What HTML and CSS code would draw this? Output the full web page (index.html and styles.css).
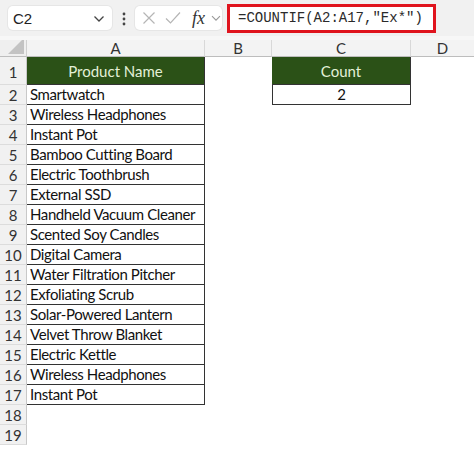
FILE: index.html
```html
<!DOCTYPE html>
<html>
<head>
    <meta charset='utf-8'>
    <title>Book1</title>
    <link rel="stylesheet" href="styles.css">
</head>
<body>
<div class="app">
    <div class="toolbar">
        <div class="nameBox">
            <span>C2</span>
            <svg class="chev" width="12" height="8" viewBox="0 0 12 8"><path d="M1.5 1.5 L6 6 L10.5 1.5" fill="none" stroke="#444" stroke-width="1.3"/></svg>
        </div>
        <div class="dots">
            <svg width="4" height="14" viewBox="0 0 4 14"><circle cx="2" cy="2" r="1.4" fill="#444"/><circle cx="2" cy="7" r="1.4" fill="#444"/><circle cx="2" cy="12" r="1.4" fill="#444"/></svg>
        </div>
        <div class="fxBox">
            <svg width="14" height="14" viewBox="0 0 14 14"><path d="M1.5 1.5 L12.5 12.5 M12.5 1.5 L1.5 12.5" stroke="#b5b5b5" stroke-width="1.2"/></svg>
            <svg width="16" height="14" viewBox="0 0 16 14"><path d="M1 7.5 L5.5 12 L15 1.5" fill="none" stroke="#b5b5b5" stroke-width="1.2"/></svg>
            <span class="fx">fx</span>
            <svg width="10" height="7" viewBox="0 0 10 7"><path d="M1 1.2 L5 5.2 L9 1.2" fill="none" stroke="#999" stroke-width="1.1"/></svg>
        </div>
        <div class="formula">=COUNTIF(A2:A17,"Ex*")</div>
    </div>

    <div class="sheet" id="sheet">
        <div class="corner">
            <svg width="18" height="18" viewBox="0 0 18 18"><path d="M17 1 L17 17 L1 17 Z" fill="#c3c3c3"/></svg>
        </div>
        <div class="colHead">A</div>
        <div class="colHead">B</div>
        <div class="colHead">C</div>
        <div class="colHead last">D</div>
    </div>
</div>

<script>
    // fill the sheet rows
    var products = [
        "Smartwatch", "Wireless Headphones", "Instant Pot", "Bamboo Cutting Board",
        "Electric Toothbrush", "External SSD", "Handheld Vacuum Cleaner", "Scented Soy Candles",
        "Digital Camera", "Water Filtration Pitcher", "Exfoliating Scrub", "Solar-Powered Lantern",
        "Velvet Throw Blanket", "Electric Kettle", "Wireless Headphones", "Instant Pot"
    ];
    var sheet = document.getElementById("sheet");

    function cell(cls, text) {
        var d = document.createElement("div");
        d.className = cls;
        if (text) d.textContent = text;
        sheet.appendChild(d);
    }

    for (var r = 1; r <= 19; r++) {
        cell(r == 1 ? "rowHead first" : "rowHead", String(r));
        if (r == 1) {
            cell("cell head", "Product Name");
            cell("cell");
            cell("cell head", "Count");
            cell("cell");
        } else if (r <= 17) {
            cell("cell item", products[r - 2]);
            cell("cell");
            if (r == 2) cell("cell num", "2");
            else cell("cell");
            cell("cell");
        } else {
            cell("cell"); cell("cell"); cell("cell"); cell("cell");
        }
    }
</script>
</body>
</html>
```

FILE: styles.css
```css
html, body {
    margin: 0;
    padding: 0;
    background: #ffffff;
}

.app {
    width: 474px;
    height: 449px;
    overflow: hidden;
    font-family: "Lato", "Liberation Sans", sans-serif;
}

.toolbar {
    height: 36px;
    background: #f1f1f1;
    display: flex;
    align-items: center;
    padding-left: 8px;
    border-bottom: 4px solid #f7f7f7;
}

.nameBox {
    width: 104px;
    height: 24px;
    background: #fff;
    border-radius: 5px;
    box-shadow: 0 0 0 1px #e6e6e6;
    display: flex;
    align-items: center;
    justify-content: space-between;
    padding: 0 7px 0 5px;
    box-sizing: border-box;
    font-family: "Liberation Sans", sans-serif;
    font-size: 15px;
    color: #222;
}

.chev {
    margin-top: 2px;
}

.dots {
    width: 23px;
    display: flex;
    justify-content: center;
    padding-top: 2px;
}

.fxBox {
    width: 87px;
    height: 24px;
    background: #fff;
    border-radius: 5px;
    box-shadow: 0 0 0 1px #e6e6e6;
    display: flex;
    align-items: center;
    gap: 9px;
    padding-left: 7px;
    box-sizing: border-box;
}

.fx {
    font-family: "Liberation Serif", serif;
    font-style: italic;
    font-size: 18px;
    color: #333;
    margin-left: 2px;
    margin-right: -3px;
    line-height: 1;
}

.formula {
    margin-left: 5px;
    width: 209px;
    height: 29px;
    box-sizing: border-box;
    border: 3px solid #e0141e;
    background: #fff;
    display: flex;
    align-items: center;
    padding-left: 8px;
    font-family: "Liberation Mono", monospace;
    font-size: 14px;
    color: #2a2a2a;
}

.sheet {
    display: grid;
    grid-template-columns: 27px 178px 67px 139px 63px;
    grid-template-rows: 17px 28px repeat(19, 20px);
}

.corner {
    background: #efefef;
    border-right: 1px solid #d0d0d0;
    border-bottom: 1px solid #bdbdbd;
    display: flex;
    align-items: flex-end;
    justify-content: flex-end;
    padding: 0 1px 1px 0;
    overflow: hidden;
}

.colHead {
    background: #f3f3f3;
    border-right: 1px solid #d8d8d8;
    border-bottom: 1px solid #bdbdbd;
    font-size: 15px;
    color: #333;
    text-align: center;
    line-height: 17px;
}

.colHead.last {
    border-right: none;
}

.rowHead {
    background: #f1f1f1;
    border-right: 1px solid #c8c8c8;
    border-bottom: 1px solid #dcdcdc;
    font-size: 15px;
    color: #333;
    text-align: center;
    line-height: 20px;
    box-sizing: border-box;
}

.rowHead.first {
    line-height: 30px;
}

.cell {
    font-size: 15px;
    color: #111;
    white-space: nowrap;
    box-sizing: border-box;
}

.cell.head {
    background: #2b5117;
    color: #e3f0d7;
    text-align: center;
    line-height: 28px;
    border-right: 1px solid #333;
    border-bottom: 1px solid #333;
}

.cell.item {
    border-right: 1px solid #333;
    border-bottom: 1px solid #333;
    padding-left: 3px;
    line-height: 19px;
    letter-spacing: -0.4px;
}

.cell.num {
    text-align: center;
    border-right: 1px solid #333;
    border-bottom: 1px solid #333;
    border-left: 1px solid #333;
    line-height: 19px;
}
```
